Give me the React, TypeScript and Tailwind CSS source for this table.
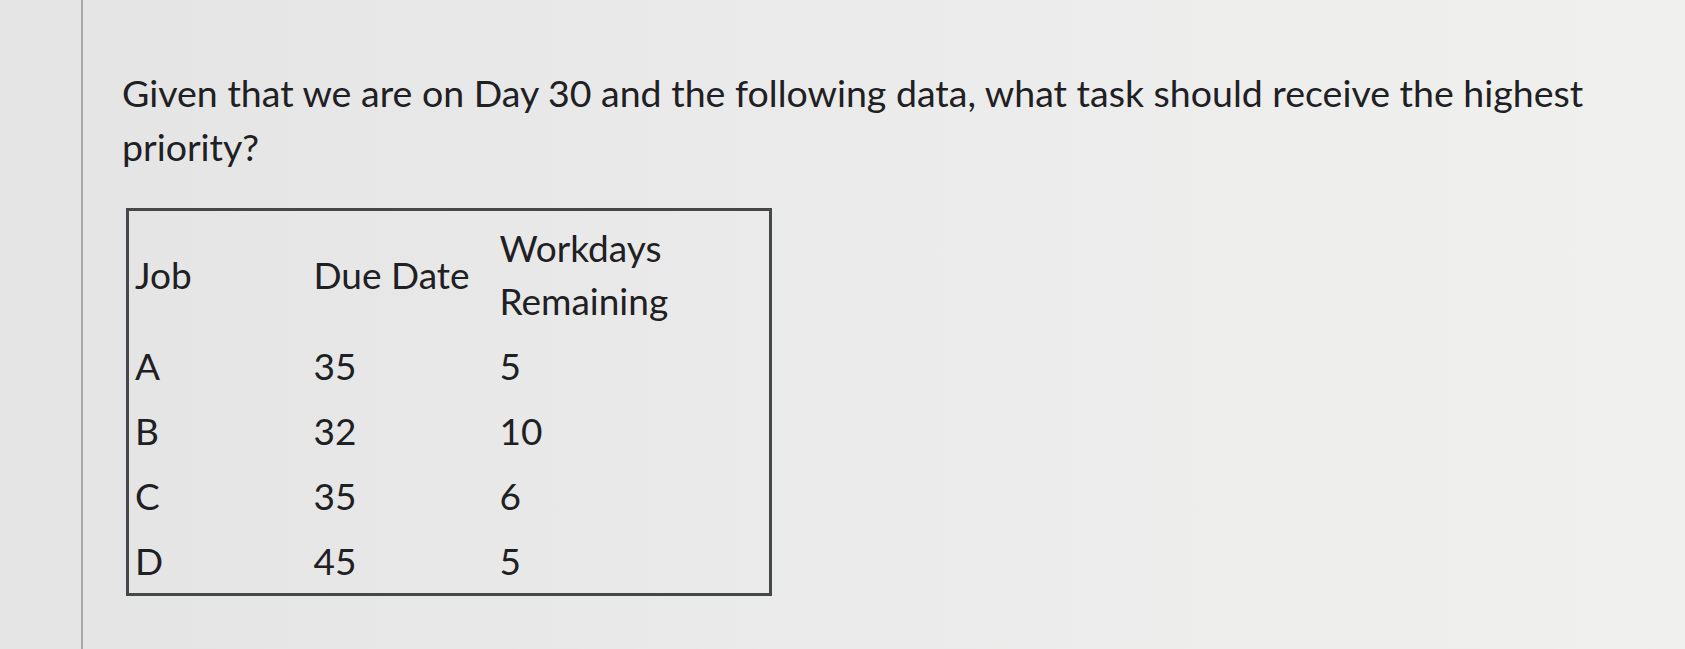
const rows = [
  { job: "A", due: "35", left: "5" },
  { job: "B", due: "32", left: "10" },
  { job: "C", due: "35", left: "6" },
  { job: "D", due: "45", left: "5" },
];

export default function App() {
  return (
    <div className="flex h-[649px] w-full overflow-hidden bg-gradient-to-r from-[#e3e4e3] via-[#eaebea] to-[#f0f0ef] font-['Lato','Open_Sans',sans-serif] text-[#1f2023]">
      <div className="w-[83px] shrink-0 border-r-2 border-[#a6a7ab] bg-[#e4e5e4]" />
      <div className="flex flex-col pl-[39px] pt-[66px]">
        <p className="max-w-[1540px] text-[37.5px] leading-[54px]">
          Given that we are on Day 30 and the following data, what task should receive the highest priority?
        </p>
        <table className="ml-[4px] mt-[34px] w-[646px] border-[3px] border-[#45474b] text-[37px] leading-[53px]">
          <thead>
            <tr>
              <th className="w-[186px] pb-[6px] pl-[6px] pt-[10px] text-left align-middle font-normal">Job</th>
              <th className="w-[186px] pb-[6px] pt-[10px] text-left align-middle font-normal">Due Date</th>
              <th className="pb-[6px] pt-[10px] text-left align-middle font-normal">
                Workdays
                <br />
                Remaining
              </th>
            </tr>
          </thead>
          <tbody>
            {rows.map((row) => (
              <tr key={row.job}>
                <td className="py-[6px] pl-[6px]">{row.job}</td>
                <td className="py-[6px]">{row.due}</td>
                <td className="py-[6px]">{row.left}</td>
              </tr>
            ))}
          </tbody>
        </table>
      </div>
    </div>
  );
}
